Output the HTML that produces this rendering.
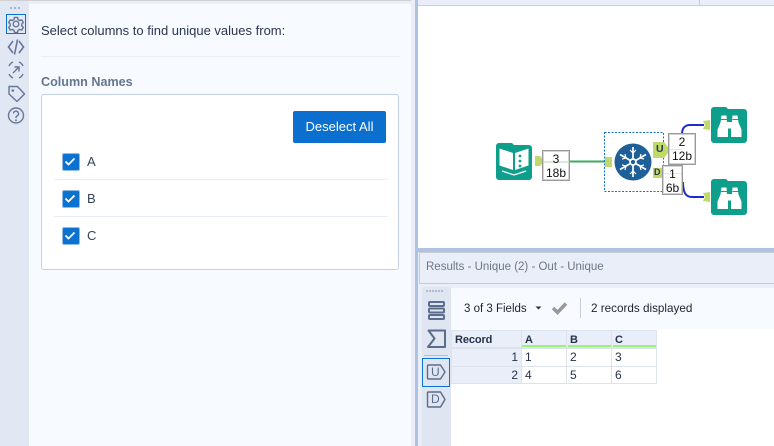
<!DOCTYPE html>
<html><head><meta charset="utf-8">
<style>
html,body{margin:0;padding:0}
body{width:774px;height:446px;overflow:hidden;position:relative;background:#e9eef8;font-family:"Liberation Sans",sans-serif;color:#27334a}
.a{position:absolute;box-sizing:border-box}
.t{position:absolute;white-space:nowrap}
.cb{position:absolute;left:62px;width:16px;height:16px;background:#0b72d0;border-radius:2px;border:1px solid #8fbbe6}
.lbl{position:absolute;left:87px;font-size:13px;line-height:16px;color:#36425a}
.c{position:absolute;box-sizing:border-box;background:#fff;border:1px solid #dbe3ef;font-size:12px;line-height:16px;padding-left:3px;color:#27334a}
.h{background:#e9eef8;font-weight:bold;font-size:11px;letter-spacing:-.1px;color:#27334a;padding-top:1px}
.box{position:absolute;box-sizing:border-box;background:#fff;border:1px solid #999;box-shadow:inset 0 0 0 1px #d4d4d4;text-align:center;font-size:12px;line-height:14px;color:#111;padding-top:1px}
.g{position:absolute;top:345px;height:2px;background:#9cf07c}
</style></head><body>
<!-- left panel -->
<div class="a" style="left:0;top:0;width:411px;height:1px;background:#d0d0d0"></div>
<div class="a" style="left:0;top:1px;width:29px;height:445px;background:#e1e7f3"></div>
<div class="a" style="left:29px;top:4px;width:382px;height:442px;background:#f7faff"></div>
<div class="a" style="left:411px;top:0;width:4px;height:446px;background:#e9eef8"></div>
<div class="a" style="left:415px;top:0;width:3px;height:446px;background:#b0c2e2"></div>
<svg class="a" style="left:0;top:0" width="29" height="130" viewBox="0 0 29 130">
<g fill="#aab3c4"><rect x="10" y="7" width="2" height="2"/><rect x="14" y="7" width="2" height="2"/><rect x="18" y="7" width="2" height="2"/></g>
<rect x="6.500" y="14.500" width="19" height="19" fill="none" stroke="#0b73d1"/>
<g fill="none" stroke="#66779a" stroke-width="1.400">
<circle cx="16" cy="24" r="2.800"/>
<path d="M14.500 17.500h3l.5 2 1.800 1 2-.6 1.500 2.600-1.500 1.500v1.900l1.500 1.500-1.500 2.600-2-.6-1.800 1-.5 2h-3l-.5-2-1.800-1-2 .6-1.500-2.600 1.500-1.500v-1.900l-1.500-1.500 1.500-2.600 2 .6 1.800-1z"/>
<path d="M13 41l-4.500 6 4.500 6M19 41l4.500 6-4.500 6M17.500 39.500l-3 15" stroke-width="1.600"/>
<path d="M9 66a8 8 0 0 1 4-4M19 62a8 8 0 0 1 4 4M23 74a8 8 0 0 1-4 4M13 78a8 8 0 0 1-4-4" />
<path d="M13 73l6-6M14.500 67H19v4.500"/>
<path d="M9 86.500h8.500l7 7.500-7.500 7.500L9 94z" stroke-linejoin="round"/>
<circle cx="16" cy="115.500" r="7.500"/>
<path d="M13.500 113.500a2.500 2.500 0 1 1 3.500 2.500c-1 .5-1 1-1 2"/>
</g>
<circle cx="12.800" cy="90.500" r="1.300" fill="#66779a"/>
<circle cx="16" cy="120.300" r="1" fill="#66779a"/>
</svg>
<div class="t" style="left:41px;top:22px;font-size:13px;line-height:17px;color:#2b3650">Select columns to find unique values from:</div>
<div class="a" style="left:41px;top:56px;width:359px;height:1px;background:#e9eef6"></div>
<div class="t" style="left:41px;top:74px;font-size:12.600px;line-height:17px;font-weight:bold;color:#66768f">Column Names</div>
<div class="a" style="left:41px;top:94px;width:358px;height:176px;background:#fff;border:1px solid #c5d1e6;border-radius:3px"></div>
<div class="a" style="left:293px;top:111px;width:93px;height:32px;background:#0b6fcf;border-radius:2px;color:#fff;font-size:13px;line-height:32px;text-align:center">Deselect All</div>
<div class="cb" style="top:153px"><svg width="14" height="14" style="display:block"><path d="M2.500 7.500l3 3 6-6" fill="none" stroke="#fff" stroke-width="1.800"/></svg></div>
<div class="lbl" style="top:154px">A</div>
<div class="a" style="left:54px;top:179px;width:334px;height:1px;background:#e9eef6"></div>
<div class="cb" style="top:190px"><svg width="14" height="14" style="display:block"><path d="M2.500 7.500l3 3 6-6" fill="none" stroke="#fff" stroke-width="1.800"/></svg></div>
<div class="lbl" style="top:191px">B</div>
<div class="a" style="left:54px;top:216px;width:334px;height:1px;background:#e9eef6"></div>
<div class="cb" style="top:227px"><svg width="14" height="14" style="display:block"><path d="M2.500 7.500l3 3 6-6" fill="none" stroke="#fff" stroke-width="1.800"/></svg></div>
<div class="lbl" style="top:228px">C</div>

<!-- top strip and canvas -->
<div class="a" style="left:418px;top:0;width:356px;height:6px;background:#e9eef9;border-bottom:1px solid #c3cfe5"></div>
<div class="a" style="left:699px;top:0;width:1px;height:5px;background:#c3cfe5"></div>
<div class="a" style="left:418px;top:6px;width:356px;height:242px;background:#fff"></div>
<div class="a" style="left:418px;top:248px;width:356px;height:4px;background:#b0c2e2"></div>

<!-- canvas drawing -->
<svg class="a" style="left:418px;top:6px;overflow:visible" width="356" height="242" viewBox="418 6 356 242">
<!-- input tool -->
<path d="M496 146a3 3 0 0 1 3-3h13l2 2h15a3 3 0 0 1 3 3v29a3 3 0 0 1-3 3h-30a3 3 0 0 1-3-3z" fill="#0e9e8c"/>
<path d="M499.500 148.500l13.500 4.500v17l-13.500-4.500zM528.500 148.500l-13.500 4.500v17l13.500-4.500z" fill="#fff"/>
<path d="M502 171l12 4 12-4" fill="none" stroke="#fff" stroke-width="1.300"/>
<g fill="#0e9e8c"><circle cx="520" cy="156" r="1.400"/><circle cx="520" cy="161" r="1.400"/><circle cx="520" cy="166" r="1.400"/></g>
<path d="M535 156h5l2 2v6l-2 2h-5z" fill="#bfd96b"/>
<!-- wires -->
<path d="M570 161.500H606" stroke="#3dab60" stroke-width="2" fill="none"/>
<path d="M682 134c0-6 3-9 8-9h14" stroke="#1f2bd0" stroke-width="2" fill="none"/>
<path d="M683 182c0 11 3 15 9 15h12" stroke="#1f2bd0" stroke-width="2" fill="none"/>
<!-- selection -->
<rect x="604.500" y="132.500" width="59" height="59" fill="none" stroke="#0b73d1" stroke-dasharray="2 1.500"/>
<path d="M605 157h7v10h-7z" fill="#bfd96b"/>
<circle cx="633" cy="162" r="18.500" fill="#1f5f97"/>
<g stroke="#fff" stroke-width="1.700" fill="none">
<circle cx="633" cy="162" r="3"/>
<path d="M633 147v12M633 165v12M620 154.500l10.400 6M635.600 163.500l10.400 6M620 169.500l10.400-6M635.600 160.500l10.400-6"/>
<path d="M630 150l3 3 3-3M630 174l3-3 3 3M622 159l4-1-1-4M644 159l-4-1 1-4M622 165l4 1-1 4M644 165l-4 1 1 4" stroke-width="1.200"/>
</g>
<!-- anchors -->
<path d="M653 142h11l4 5v6l-4 5h-11z" fill="#bfd96b"/>
<path d="M653 168h9v10h-9z" fill="#bfd96b"/>
<path d="M703 121l7-1v10l-7-1 2-4zM703 193l7-1v10l-7-1 2-4z" fill="#bfd96b"/>
<!-- browse tools -->
<path d="M711 110a3 3 0 0 1 3-3h12l2 2h16a3 3 0 0 1 3 3v28a3 3 0 0 1-3 3h-30a3 3 0 0 1-3-3z" fill="#0e9e8c"/>
<path d="M721.500 115.500h5l.5 6.500h5l.5-6.500h5l1 7 3 7v7.500h-10.500v-8.500h-3v8.500H717.500v-7.500l3-7z" fill="#fff"/>
<path d="M721 119.500h6M732.500 119.500h6" stroke="#0e9e8c" stroke-width="1"/>
<path d="M711 182a3 3 0 0 1 3-3h12l2 2h16a3 3 0 0 1 3 3v28a3 3 0 0 1-3 3h-30a3 3 0 0 1-3-3z" fill="#0e9e8c"/>
<path d="M721.500 187.500h5l.5 6.500h5l.5-6.500h5l1 7 3 7v7.500h-10.500v-8.500h-3v8.500H717.500v-7.500l3-7z" fill="#fff"/>
<path d="M721 191.500h6M732.500 191.500h6" stroke="#0e9e8c" stroke-width="1"/>
</svg>
<div class="box" style="left:542px;top:150px;width:28px;height:31px;background:linear-gradient(#fff 10px,#d5ecdc 10px,#d5ecdc 12px,#fff 12px)">3<br>18b</div>
<div class="box" style="left:668px;top:133px;width:28px;height:32px;background:linear-gradient(#fff 15px,#dfe0f5 15px,#dfe0f5 16px,#fff 16px) no-repeat 0 0/12px 100%,#fff">2<br>12b</div>
<div class="box" style="left:662px;top:165px;width:21px;height:30px;background:linear-gradient(#fff 7px,#e2e3f7 7px,#e2e3f7 8px,#fff 8px)">1<br>6b</div>
<div class="t" style="left:656px;top:143px;font-size:10.500px;line-height:13px;font-weight:bold;color:#26364f">U</div>
<div class="t" style="left:654px;top:167px;font-size:9px;line-height:11px;font-weight:bold;color:#26364f">D</div>

<!-- results -->
<div class="a" style="left:419px;top:252px;width:355px;height:32px;border:1px solid #c8ccd0;border-right:0;background:#e9eef8"></div>
<div class="t" style="left:426px;top:260px;font-size:11.500px;line-height:15px;color:#6e7785">Results - Unique (2) - Out - Unique</div>
<div class="a" style="left:422px;top:287px;width:29px;height:159px;background:#dfe5f1;border-radius:3px 3px 0 0"></div>
<div class="a" style="left:451px;top:288px;width:323px;height:158px;background:#fff"></div>
<div class="a" style="left:451px;top:288px;width:323px;height:41px;background:#f7faff"></div>
<svg class="a" style="left:422px;top:287px" width="29" height="130" viewBox="422 287 29 130">
<g fill="#b4bcc9"><rect x="426" y="290" width="2" height="2"/><rect x="429" y="290" width="2" height="2"/><rect x="432" y="290" width="2" height="2"/><rect x="435" y="290" width="2" height="2"/><rect x="438" y="290" width="2" height="2"/><rect x="441" y="290" width="2" height="2"/></g>
<g fill="none" stroke="#5b6d8c" stroke-width="2">
<rect x="429" y="302" width="15" height="4" rx="1"/><rect x="429" y="308.500" width="15" height="4" rx="1"/><rect x="429" y="315" width="15" height="4" rx="1"/>
<path d="M428.500 330.500h16.500v16.500h-17l6.500-8.500z" stroke-linejoin="round"/>
</g>
<rect x="424" y="355" width="24" height="1" fill="#b9bfc8"/>
<rect x="422.500" y="358.500" width="27" height="28" fill="none" stroke="#0b73d1"/>
<g fill="none" stroke="#5b6d8c" stroke-width="1.400" stroke-linejoin="round">
<path d="M428.500 365h12l4.500 7-4.500 7h-12a1 1 0 0 1-1-1v-12a1 1 0 0 1 1-1z"/>
<path d="M428.500 392h12l4.500 7.500-4.500 7.500h-12a1 1 0 0 1-1-1v-13a1 1 0 0 1 1-1z"/>
</g>
</svg>
<div class="t" style="left:431px;top:365px;font-size:12px;line-height:14px;color:#5b6d8c">U</div>
<div class="t" style="left:431px;top:392px;font-size:12px;line-height:15px;color:#5b6d8c">D</div>

<div class="t" style="left:464px;top:301px;font-size:11.500px;line-height:16px;color:#1d2430">3 of 3 Fields</div>
<svg class="a" style="left:530px;top:300px" width="44" height="18" viewBox="530 300 44 18">
<path d="M535.500 306.500h6l-3 3z" fill="#27334a"/>
<path d="M553 308l4.500 4.500L566 303.500" fill="none" stroke="#97999c" stroke-width="3.500"/>
</svg>
<div class="a" style="left:580px;top:298px;width:1px;height:20px;background:#c9ced6"></div>
<div class="t" style="left:591px;top:301px;font-size:11.700px;line-height:16px;color:#1d2430">2 records displayed</div>

<!-- table -->
<div class="c h" style="left:451px;top:330px;width:71px;height:18px;padding-left:3px">Record</div>
<div class="c h" style="left:521px;top:330px;width:46px;height:18px">A</div>
<div class="c h" style="left:566px;top:330px;width:46px;height:18px">B</div>
<div class="c h" style="left:611px;top:330px;width:46px;height:18px">C</div>
<div class="g" style="left:522px;width:44px"></div>
<div class="g" style="left:568px;width:43px"></div>
<div class="g" style="left:613px;width:43px"></div>
<div class="c" style="left:451px;top:348px;width:71px;height:19px;background:#e9eef8;text-align:right;padding-right:3px">1</div>
<div class="c" style="left:521px;top:348px;width:46px;height:19px">1</div>
<div class="c" style="left:566px;top:348px;width:46px;height:19px">2</div>
<div class="c" style="left:611px;top:348px;width:46px;height:19px">3</div>
<div class="c" style="left:451px;top:366px;width:71px;height:18px;background:#e9eef8;text-align:right;padding-right:3px">2</div>
<div class="c" style="left:521px;top:366px;width:46px;height:18px">4</div>
<div class="c" style="left:566px;top:366px;width:46px;height:18px">5</div>
<div class="c" style="left:611px;top:366px;width:46px;height:18px">6</div>
</body></html>
